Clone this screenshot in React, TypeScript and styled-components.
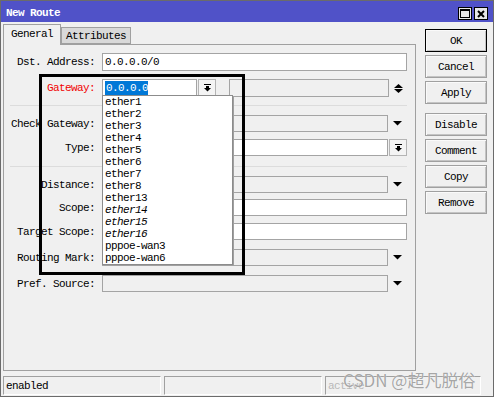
import * as React from 'react'
import styled, { createGlobalStyle } from 'styled-components'

const MONO = `"Liberation Mono", "DejaVu Sans Mono", monospace`

const GlobalStyle = createGlobalStyle`
  html, body {
    margin: 0;
    padding: 0;
    background: #f0f0f0;
  }
  body {
    font-family: ${MONO};
    font-size: 11px;
    letter-spacing: -0.6px;
    color: #000;
  }
`

const Window = styled.div`
  position: relative;
  width: 494px;
  height: 397px;
  box-sizing: border-box;
  border: 1px solid #6b6b6b;
  background: #f0f0f0;
  display: flex;
  flex-direction: column;
  overflow: hidden;
`

const TitleBar = styled.div`
  height: 21px;
  flex: none;
  background: #5052c8;
  color: #fff;
  font-weight: bold;
  display: flex;
  justify-content: space-between;
  align-items: center;
  padding: 0 5px;
`

const TitleText = styled.span`
  margin-top: 2px;
`

const CaptionButtons = styled.div`
  display: flex;
  gap: 2px;
  align-self: flex-end;
  margin-bottom: 2px;
`

const CaptionButton = styled.div`
  width: 14px;
  height: 13px;
  box-sizing: border-box;
  border: 1px solid #000;
  background: #e8e8e8;
  display: flex;
  align-items: center;
  justify-content: center;
`

const Main = styled.div`
  display: flex;
  padding-top: 2px;
  height: 349px;
  flex: none;
`

const LeftCol = styled.div`
  margin-left: 2px;
  width: 413px;
  display: flex;
  flex-direction: column;
`

const Tabs = styled.div`
  display: flex;
  align-items: flex-end;
  height: 20px;
`

const Tab = styled.div<{ $active?: boolean; $width: number }>`
  position: relative;
  box-sizing: border-box;
  width: ${p => p.$width}px;
  height: ${p => (p.$active ? 21 : 17)}px;
  margin-bottom: ${p => (p.$active ? -1 : 0)}px;
  border: 1px solid #a0a0a0;
  border-bottom: ${p => (p.$active ? 'none' : '1px solid #a0a0a0')};
  background: ${p => (p.$active ? '#f0f0f0' : '#d9d9d9')};
  display: flex;
  align-items: center;
  justify-content: center;
  padding-bottom: ${p => (p.$active ? 2 : 0)}px;
  z-index: ${p => (p.$active ? 1 : 0)};
`

const Panel = styled.div`
  box-sizing: border-box;
  height: 327px;
  border: 1px solid #a0a0a0;
  display: flex;
  flex-direction: column;
`

const Row = styled.div<{ $top: number; $h?: number }>`
  display: flex;
  align-items: center;
  height: ${p => p.$h || 17}px;
  margin-top: ${p => p.$top}px;
`

const Label = styled.div<{ $red?: boolean }>`
  width: 91px;
  flex: none;
  text-align: right;
  margin-right: 7px;
  white-space: nowrap;
  color: ${p => (p.$red ? '#f00000' : '#000')};
`

const Field = styled.div<{ $width: number; $white?: boolean }>`
  position: relative;
  box-sizing: border-box;
  width: ${p => p.$width}px;
  height: 100%;
  border: 1px solid #a4a4a4;
  background: ${p => (p.$white ? '#fff' : '#f0f0f0')};
  display: flex;
  align-items: center;
  padding-left: 2px;
  flex: none;
`

const ComboButton = styled.div<{ $gap?: number }>`
  box-sizing: border-box;
  width: 18px;
  height: 100%;
  margin-left: 1px;
  margin-right: ${p => p.$gap || 0}px;
  border: 1px solid #b4b4b4;
  background: #f4f4f4;
  display: flex;
  align-items: center;
  justify-content: center;
  flex: none;
`

const ArrowCell = styled.div`
  width: 19px;
  display: flex;
  justify-content: center;
  align-items: center;
  flex: none;
`

const Separator = styled.div<{ $top: number }>`
  height: 1px;
  width: 397px;
  margin-left: 6px;
  margin-top: ${p => p.$top}px;
  background: #dcdcdc;
  flex: none;
`

const Selected = styled.span`
  background: #0078d7;
  color: #fff;
  padding: 1px 0 1px 1px;
`

const DropList = styled.div`
  position: absolute;
  left: -1px;
  top: 15px;
  width: 131px;
  box-sizing: border-box;
  border: 1px solid #8c8c8c;
  background: #fff;
  box-shadow: 1px 1px 0 #a0a0a0;
  z-index: 5;
`

const DropItem = styled.div<{ $italic?: boolean }>`
  height: 12px;
  line-height: 12px;
  padding-left: 2px;
  font-style: ${p => (p.$italic ? 'italic' : 'normal')};
  white-space: nowrap;
`

const ButtonCol = styled.div`
  margin-left: 9px;
  padding-top: 5px;
  display: flex;
  flex-direction: column;
  gap: 3px;
`

const Button = styled.div<{ $default?: boolean; $top?: number }>`
  box-sizing: border-box;
  width: 62px;
  height: 23px;
  margin-top: ${p => p.$top || 0}px;
  border: 1px solid ${p => (p.$default ? '#000' : '#a0a0a0')};
  box-shadow: inset 1px 1px 0 #fafafa, inset -1px -1px 0 #c4c4c4;
  background: #f0f0f0;
  display: flex;
  align-items: center;
  justify-content: center;
`

const StatusBar = styled.div`
  display: flex;
  gap: 3px;
  margin-top: 3px;
  padding-left: 2px;
  height: 19px;
`

const StatusCell = styled.div<{ $width: number; $faded?: boolean }>`
  box-sizing: border-box;
  width: ${p => p.$width}px;
  height: 100%;
  border: 1px solid;
  border-color: #a0a0a0 #ffffff #ffffff #a0a0a0;
  padding-left: 2px;
  display: flex;
  align-items: center;
  color: ${p => (p.$faded ? '#b8b8b8' : '#000')};
`

const Watermark = styled.div`
  position: absolute;
  left: 342px;
  top: 369px;
  font-family: "Noto Sans CJK SC", "Noto Sans", sans-serif;
  font-size: 17px;
  letter-spacing: 0;
  line-height: 20px;
  color: rgba(150, 150, 150, 0.85);
  text-shadow: 0 0 1px #fff;
  white-space: nowrap;
`

const Annotation = styled.div`
  position: absolute;
  left: 38px;
  top: 73px;
  width: 206px;
  height: 201px;
  box-sizing: border-box;
  border: 3px solid #000;
  pointer-events: none;
  z-index: 6;
`

const DownArrow = () => (
  <svg width="9" height="5" viewBox="0 0 9 5">
    <polygon points="0,0 9,0 4.5,4.5" fill="#000" />
  </svg>
)

const UpDown = () => (
  <svg width="9" height="9" viewBox="0 0 9 9">
    <polygon points="4.5,0 9,4 0,4" fill="#000" />
    <polygon points="0,5 9,5 4.5,9" fill="#000" />
  </svg>
)

const ComboIcon = () => (
  <svg width="7" height="8" viewBox="0 0 7 8">
    <rect x="0" y="0" width="7" height="1" fill="#000" />
    <rect x="2" y="2" width="3" height="2" fill="#000" />
    <polygon points="0,4 7,4 3.5,7.5" fill="#000" />
  </svg>
)

const interfaces: { name: string; italic?: boolean }[] = [
  { name: 'ether1' },
  { name: 'ether2' },
  { name: 'ether3' },
  { name: 'ether4' },
  { name: 'ether5' },
  { name: 'ether6' },
  { name: 'ether7' },
  { name: 'ether8' },
  { name: 'ether13' },
  { name: 'ether14', italic: true },
  { name: 'ether15', italic: true },
  { name: 'ether16', italic: true },
  { name: 'pppoe-wan3' },
  { name: 'pppoe-wan6' },
]

export default function App() {
  return (
    <>
      <GlobalStyle />
      <Window>
        <TitleBar>
          <TitleText>New Route</TitleText>
          <CaptionButtons>
            <CaptionButton>
              <svg width="10" height="9" viewBox="0 0 10 9">
                <rect x="0.5" y="0.5" width="9" height="8" fill="none" stroke="#000" />
                <rect x="0" y="0" width="10" height="2" fill="#000" />
              </svg>
            </CaptionButton>
            <CaptionButton>
              <svg width="8" height="8" viewBox="0 0 8 8">
                <path d="M1 1 L7 7 M7 1 L1 7" stroke="#000" strokeWidth="2" />
              </svg>
            </CaptionButton>
          </CaptionButtons>
        </TitleBar>

        <Main>
          <LeftCol>
            <Tabs>
              <Tab $active $width={58}>General</Tab>
              <Tab $width={70}>Attributes</Tab>
            </Tabs>
            <Panel>
              <Row $top={8} $h={18}>
                <Label>Dst. Address:</Label>
                <Field $width={305} $white>0.0.0.0/0</Field>
              </Row>
              <Row $top={8} $h={18}>
                <Label $red>Gateway:</Label>
                <Field $width={95} $white>
                  <Selected>0.0.0.0</Selected>
                  <DropList>
                    {interfaces.map(i => (
                      <DropItem key={i.name} $italic={i.italic}>{i.name}</DropItem>
                    ))}
                  </DropList>
                </Field>
                <ComboButton $gap={13}><ComboIcon /></ComboButton>
                <Field $width={160} />
                <ArrowCell><UpDown /></ArrowCell>
              </Row>
              <Separator $top={8} />
              <Row $top={9}>
                <Label>Check Gateway:</Label>
                <Field $width={286} />
                <ArrowCell><DownArrow /></ArrowCell>
              </Row>
              <Row $top={7}>
                <Label>Type:</Label>
                <Field $width={286} $white />
                <ComboButton><ComboIcon /></ComboButton>
              </Row>
              <Separator $top={10} />
              <Row $top={9}>
                <Label>Distance:</Label>
                <Field $width={286} />
                <ArrowCell><DownArrow /></ArrowCell>
              </Row>
              <Row $top={6}>
                <Label>Scope:</Label>
                <Field $width={305} $white />
              </Row>
              <Row $top={7}>
                <Label>Target Scope:</Label>
                <Field $width={305} $white />
              </Row>
              <Row $top={9}>
                <Label>Routing Mark:</Label>
                <Field $width={286} />
                <ArrowCell><DownArrow /></ArrowCell>
              </Row>
              <Row $top={9}>
                <Label>Pref. Source:</Label>
                <Field $width={286} />
                <ArrowCell><DownArrow /></ArrowCell>
              </Row>
            </Panel>
          </LeftCol>

          <ButtonCol>
            <Button $default>OK</Button>
            <Button>Cancel</Button>
            <Button>Apply</Button>
            <Button $top={6}>Disable</Button>
            <Button>Comment</Button>
            <Button>Copy</Button>
            <Button>Remove</Button>
          </ButtonCol>
        </Main>

        <StatusBar>
          <StatusCell $width={158}>enabled</StatusCell>
          <StatusCell $width={158} />
          <StatusCell $width={156} $faded>active</StatusCell>
        </StatusBar>

        <Watermark>CSDN @超凡脱俗</Watermark>
        <Annotation />
      </Window>
    </>
  )
}
